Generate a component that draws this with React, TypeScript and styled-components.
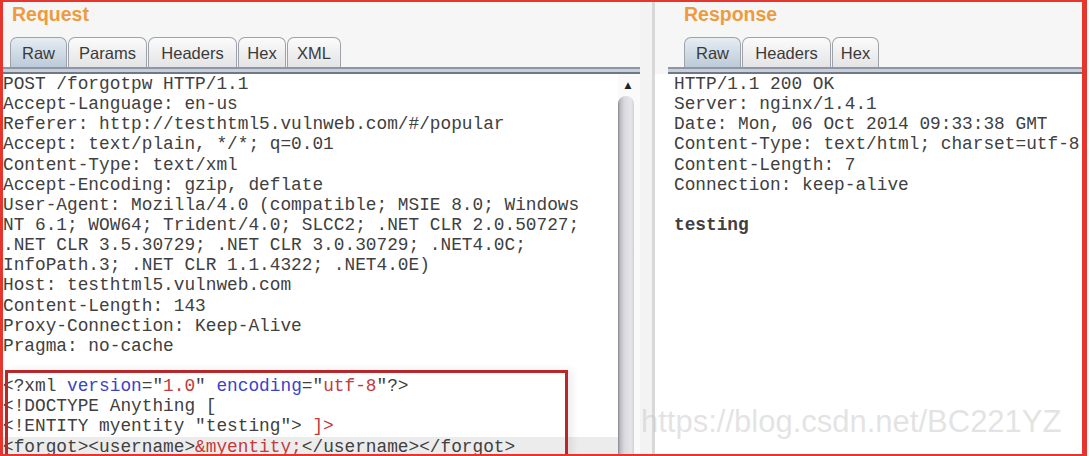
import React from "react";
import styled, { createGlobalStyle } from "styled-components";

const GlobalStyle = createGlobalStyle`
  html, body {
    margin: 0;
    padding: 0;
    background: #ffffff;
  }
`;

const Frame = styled.div`
  position: relative;
  display: flex;
  width: 1087px;
  height: 456px;
  box-sizing: border-box;
  border-style: solid;
  border-color: #e5352c;
  border-width: 2px 5px 2px 3px;
  background: #f6f6f6;
  overflow: hidden;
`;

const Pane = styled.div<{ $w?: number }>`
  display: flex;
  flex-direction: column;
  ${(p) => (p.$w ? `width: ${p.$w}px; flex: none;` : "flex: 1;")}
  min-width: 0;
`;

const Title = styled.div<{ $pad: number }>`
  height: 35px;
  box-sizing: border-box;
  padding: 1px 0 0 ${(p) => p.$pad}px;
  font-family: "Liberation Sans", Arial, sans-serif;
  font-weight: bold;
  font-size: 19.5px;
  line-height: 22px;
  color: #ec9b3f;
`;

const TabRow = styled.div<{ $pad: number }>`
  height: 30px;
  padding-left: ${(p) => p.$pad}px;
  display: flex;
  align-items: flex-end;
  gap: 1px;
`;

const Tab = styled.div<{ $w: number; $active?: boolean }>`
  width: ${(p) => p.$w}px;
  height: 30px;
  box-sizing: border-box;
  border: 1px solid #9ea3ab;
  border-bottom: none;
  border-radius: 7px 7px 0 0;
  display: flex;
  align-items: center;
  justify-content: center;
  font-family: "Liberation Sans", Arial, sans-serif;
  font-size: 16.5px;
  color: #3a3a3a;
  padding-top: 2px;
  background: ${(p) =>
    p.$active
      ? "linear-gradient(#e6edf3, #bccad8)"
      : "linear-gradient(#fbfbfb, #e4e4e6)"};
`;

const Bar = styled.div<{ $indent?: number }>`
  height: 7px;
  box-sizing: border-box;
  margin-left: ${(p) => p.$indent || 0}px;
  border-top: 2px solid #8d97a5;
  border-bottom: 2px solid #6e7886;
  background: #c8cfd9;
`;

const Body = styled.div`
  flex: 1;
  display: flex;
  background: #ffffff;
  min-height: 0;
`;

const TextArea = styled.div<{ $pad?: number }>`
  position: relative;
  flex: 1;
  overflow: hidden;
  padding-left: ${(p) => p.$pad || 0}px;
  font-family: "Liberation Mono", "Courier New", monospace;
  font-size: 17.8px;
  color: #404040;
`;

const Line = styled.div<{ $hl?: boolean; $bold?: boolean }>`
  height: 20.15px;
  line-height: 20.15px;
  white-space: pre;
  font-weight: ${(p) => (p.$bold ? "bold" : "normal")};
  background: ${(p) => (p.$hl ? "#ececec" : "transparent")};
`;

const Tok = styled.span<{ $kind: "attr" | "val" }>`
  color: ${(p) => (p.$kind === "attr" ? "#3b42c9" : "#c23a3a")};
`;

const Highlight = styled.div`
  position: absolute;
  left: 2px;
  top: 296px;
  width: 557px;
  height: 100px;
  border: 3px solid #b8282b;
  box-shadow: 4px 0 8px rgba(0, 0, 0, 0.08);
`;

const Scrollbar = styled.div`
  width: 22px;
  flex: none;
  display: flex;
  flex-direction: column;
  background: #fafafa;
`;

const Arrow = styled.div`
  height: 22px;
  display: flex;
  align-items: center;
  justify-content: center;
  padding-right: 2px;
  font-size: 9px;
  color: #222;
  font-family: "DejaVu Sans", sans-serif;
`;

const Thumb = styled.div`
  flex: 1;
  width: 16px;
  border-radius: 8px 8px 0 0;
  background: linear-gradient(
    to right,
    #85858b 0,
    #b9b9c0 2px,
    #dadade 40%,
    #e6e6ea 80%,
    #d2d2d6 100%
  );
`;

const Splitter = styled.div`
  width: 12px;
  flex: none;
  background: #f3f3f3;
  border-right: 3px solid #d8d8d8;
`;

const Watermark = styled.div`
  position: absolute;
  left: 638px;
  top: 402px;
  font-family: "Liberation Sans", Arial, sans-serif;
  font-size: 31px;
  color: rgba(200, 200, 200, 0.5);
  white-space: nowrap;
  pointer-events: none;
`;

const requestLines = [
  "POST /forgotpw HTTP/1.1",
  "Accept-Language: en-us",
  "Referer: http://testhtml5.vulnweb.com/#/popular",
  "Accept: text/plain, */*; q=0.01",
  "Content-Type: text/xml",
  "Accept-Encoding: gzip, deflate",
  "User-Agent: Mozilla/4.0 (compatible; MSIE 8.0; Windows",
  "NT 6.1; WOW64; Trident/4.0; SLCC2; .NET CLR 2.0.50727;",
  ".NET CLR 3.5.30729; .NET CLR 3.0.30729; .NET4.0C;",
  "InfoPath.3; .NET CLR 1.1.4322; .NET4.0E)",
  "Host: testhtml5.vulnweb.com",
  "Content-Length: 143",
  "Proxy-Connection: Keep-Alive",
  "Pragma: no-cache",
  "",
];

const responseLines = [
  "HTTP/1.1 200 OK",
  "Server: nginx/1.4.1",
  "Date: Mon, 06 Oct 2014 09:33:38 GMT",
  "Content-Type: text/html; charset=utf-8",
  "Content-Length: 7",
  "Connection: keep-alive",
  "",
];

export default function App() {
  return (
    <>
      <GlobalStyle />
      <Frame>
        <Pane $w={637}>
          <Title $pad={9}>Request</Title>
          <TabRow $pad={7}>
            <Tab $w={57} $active>Raw</Tab>
            <Tab $w={79}>Params</Tab>
            <Tab $w={89}>Headers</Tab>
            <Tab $w={48}>Hex</Tab>
            <Tab $w={54}>XML</Tab>
          </TabRow>
          <Bar />
          <Body>
            <TextArea>
              {requestLines.map((l, i) => (
                <Line key={i}>{l}</Line>
              ))}
              <Line>
                {"<?xml "}
                <Tok $kind="attr">version</Tok>
                {'="'}
                <Tok $kind="val">1.0</Tok>
                {'" '}
                <Tok $kind="attr">encoding</Tok>
                {'="'}
                <Tok $kind="val">utf-8</Tok>
                {'"?>'}
              </Line>
              <Line>{"<!DOCTYPE Anything ["}</Line>
              <Line>
                {'<!ENTITY myentity "testing"> '}
                <Tok $kind="val">]&gt;</Tok>
              </Line>
              <Line $hl>
                {"<forgot><username>"}
                <Tok $kind="val">&amp;myentity;</Tok>
                {"</username></forgot>"}
              </Line>
              <Highlight />
            </TextArea>
            <Scrollbar>
              <Arrow>▲</Arrow>
              <Thumb />
            </Scrollbar>
          </Body>
        </Pane>
        <Splitter />
        <Pane>
          <Title $pad={29}>Response</Title>
          <TabRow $pad={29}>
            <Tab $w={57} $active>Raw</Tab>
            <Tab $w={89}>Headers</Tab>
            <Tab $w={47}>Hex</Tab>
          </TabRow>
          <Bar $indent={13} />
          <Body>
            <TextArea $pad={19}>
              {responseLines.map((l, i) => (
                <Line key={i}>{l}</Line>
              ))}
              <Line $bold>testing</Line>
            </TextArea>
          </Body>
        </Pane>
        <Watermark>https://blog.csdn.net/BC221YZ</Watermark>
      </Frame>
    </>
  );
}
